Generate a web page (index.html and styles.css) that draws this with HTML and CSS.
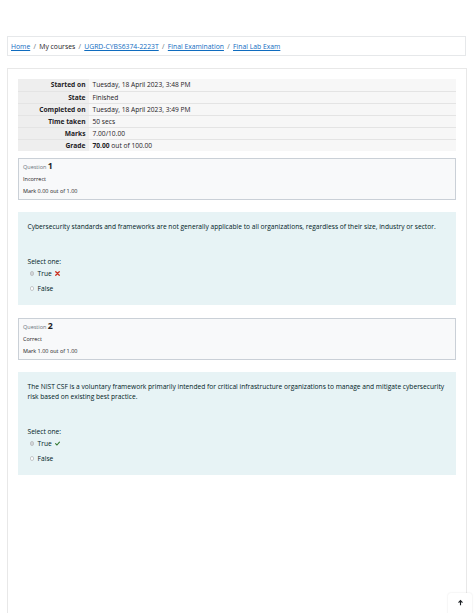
FILE: index.html
```html
<!DOCTYPE html>
<html lang="en">
<head>
<meta charset="utf-8">
<title>Final Lab Exam: Attempt review</title>
<link rel="stylesheet" href="styles.css">
</head>
<body>
<nav class="crumbs">
  <a href="#">Home</a><span class="sep">/</span><span class="plain">My courses</span><span class="sep">/</span><a href="#">UGRD-CYBS6374-2223T</a><span class="sep">/</span><a href="#">Final Examination</a><span class="sep">/</span><a href="#">Final Lab Exam</a>
</nav>
<main class="region">
  <table class="summary">
    <tr><th>Started on</th><td>Tuesday, 18 April 2023, 3:48 PM</td></tr>
    <tr><th>State</th><td>Finished</td></tr>
    <tr><th>Completed on</th><td>Tuesday, 18 April 2023, 3:49 PM</td></tr>
    <tr><th>Time taken</th><td>50 secs</td></tr>
    <tr><th>Marks</th><td>7.00/10.00</td></tr>
    <tr><th>Grade</th><td><b>70.00</b> out of 100.00</td></tr>
  </table>

  <section class="que">
    <div class="info">
      <h3 class="no">Question <span class="qno">1</span></h3>
      <div class="state">Incorrect</div>
      <div class="grade">Mark 0.00 out of 1.00</div>
    </div>
    <div class="formulation">
      <div class="qtext">Cybersecurity standards and frameworks are not generally applicable to all organizations, regardless of their size, industry or sector.</div>
      <div class="prompt">Select one:</div>
      <div class="answer">
        <div class="opt"><span class="radio checked"></span><span class="lbl">True</span><svg class="mark cross" viewBox="0 0 10 10"><path d="M1.5 1.5 L8.5 8.5 M8.5 1.5 L1.5 8.5" stroke="#ca3120" stroke-width="2.6" stroke-linecap="round"/></svg></div>
        <div class="opt"><span class="radio"></span><span class="lbl">False</span></div>
      </div>
    </div>
  </section>

  <section class="que">
    <div class="info">
      <h3 class="no">Question <span class="qno">2</span></h3>
      <div class="state">Correct</div>
      <div class="grade">Mark 1.00 out of 1.00</div>
    </div>
    <div class="formulation">
      <div class="qtext">The NIST CSF is a voluntary framework primarily intended for critical infrastructure organizations to manage and mitigate cybersecurity risk based on existing best practice.</div>
      <div class="prompt">Select one:</div>
      <div class="answer">
        <div class="opt"><span class="radio checked"></span><span class="lbl">True</span><svg class="mark check" viewBox="0 0 10 10"><path d="M1.2 5.4 L3.9 8 L8.9 2.2" fill="none" stroke="#357a32" stroke-width="2.2" stroke-linecap="round" stroke-linejoin="round"/></svg></div>
        <div class="opt"><span class="radio"></span><span class="lbl">False</span></div>
      </div>
    </div>
  </section>
</main>
<a class="totop" href="#"><svg viewBox="0 0 10 10"><path d="M5 1.2 L1.6 4.6 L2.8 5.8 L4.2 4.4 L4.2 9 L5.8 9 L5.8 4.4 L7.2 5.8 L8.4 4.6 Z" fill="#1d2125"/></svg></a>
</body>
</html>
```

FILE: styles.css
```css
html, body {
  margin: 0;
  padding: 0;
  background: #ffffff;
}
body {
  font-family: "Open Sans", "Noto Sans", sans-serif;
  font-size: 6.65px;
  color: #1d2125;
  padding: 36px 7px 0 7px;
  overflow: hidden;
  height: 613px;
  box-sizing: border-box;
}
a {
  color: #0f6cbf;
  text-decoration: underline;
}
.crumbs {
  width: 459px;
  height: 20px;
  box-sizing: border-box;
  border: 1px solid #e6e8ea;
  padding: 0 3px;
  display: flex;
  align-items: center;
  font-size: 6.8px;
  white-space: nowrap;
}
.crumbs .sep {
  color: #6a737b;
  padding: 0 3.3px;
}
.region {
  display: block;
  width: 460px;
  height: 545px;
  box-sizing: border-box;
  margin-top: 12px;
  border: 1px solid #e8e8e8;
  border-bottom: none;
  padding: 10px 10px 0 10px;
}
.summary {
  width: 100%;
  border-collapse: collapse;
  margin-bottom: 7px;
}
.summary th, .summary td {
  height: 12px;
  padding: 0 3.5px;
  border-top: 1px solid #e4e4e4;
  line-height: 11px;
  box-sizing: border-box;
}
.summary tr:first-child th, .summary tr:first-child td {
  border-top: none;
}
.summary th {
  width: 71px;
  text-align: right;
  font-weight: 700;
  background: #eeeeee;
}
.summary td {
  background: #f7f7f7;
  text-align: left;
}
.que {
  margin-bottom: 13px;
}
.info {
  background: #f8f9fa;
  border: 1px solid #cad0d7;
  padding: 2px 4px 4px 4px;
  margin-bottom: 12px;
  font-size: 5.5px;
}
.info .no {
  margin: 0;
  font-weight: 400;
  font-size: 5.5px;
  line-height: 11px;
  color: #6a737b;
}
.info .qno {
  font-size: 8.8px;
  font-weight: 700;
  color: #1d2125;
}
.info .state {
  margin-top: 3px;
  line-height: 7px;
}
.info .grade {
  margin-top: 5px;
  line-height: 7px;
}
.formulation {
  background: #e7f3f5;
  color: #001a1e;
  padding: 10px 9.5px 9px 9.5px;
}
.qtext {
  line-height: 10.5px;
}
.prompt {
  margin-top: 24px;
  line-height: 10px;
}
.opt {
  display: flex;
  align-items: center;
  height: 14.5px;
  padding-left: 2px;
}
.radio {
  width: 4.6px;
  height: 4.6px;
  border-radius: 50%;
  border: 0.6px solid #c4c7ca;
  background: #ffffff;
  box-sizing: border-box;
  margin-right: 3.5px;
}
.radio.checked {
  background: #d4d6d8;
  border-color: #c0c3c6;
}
.mark {
  width: 5px;
  height: 5px;
  margin-left: 3px;
}
.totop {
  position: fixed;
  right: 2px;
  bottom: -4px;
  width: 24px;
  height: 24px;
  background: #ffffff;
  border-radius: 3px;
  box-shadow: 0 0 2px rgba(0,0,0,0.12);
  display: flex;
  justify-content: center;
  padding-top: 6px;
  box-sizing: border-box;
}
.totop svg {
  width: 7px;
  height: 7px;
}
```
